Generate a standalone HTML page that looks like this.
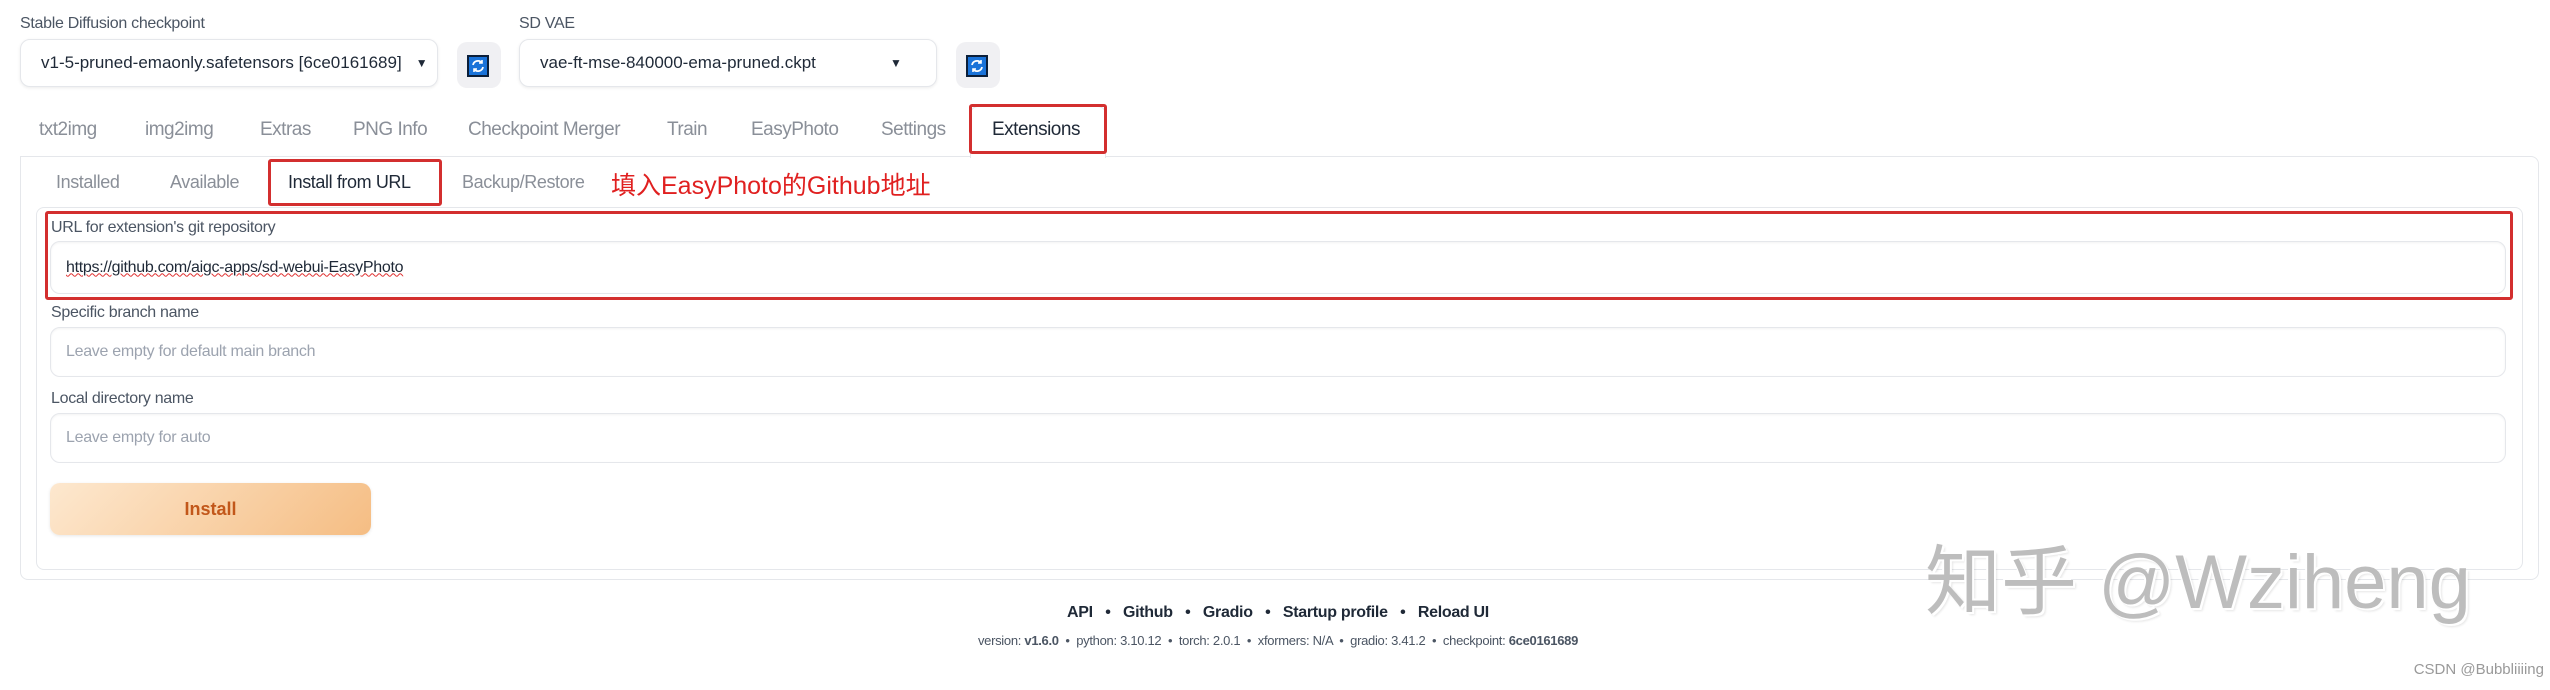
<!DOCTYPE html>
<html><head><meta charset="utf-8">
<style>
*{box-sizing:border-box;margin:0;padding:0}
body{width:2550px;height:690px;background:#fff;position:relative;overflow:hidden;font-family:"Liberation Sans","Noto Sans CJK SC",sans-serif;color:#374151}
.abs{position:absolute}
.lbl{font-size:16px;color:#4b5563;letter-spacing:-0.3px}
.dd{border:1px solid #e5e7eb;border-radius:10px;box-shadow:0 1px 3px rgba(0,0,0,.08);background:#fff;font-size:17px;color:#1f2937;display:flex;align-items:center;padding-left:20px}
.rb{background:#f0f0f3;border-radius:10px;}
.rb svg{position:absolute;left:10px;top:13px;width:22px;height:22px}
.tab{position:absolute;top:119px;font-size:19px;color:#8a8f98;letter-spacing:-0.5px}
.sub{position:absolute;top:172px;font-size:18px;color:#8a8f98;letter-spacing:-0.4px}
.red{position:absolute;border:3px solid #d32f2f;border-radius:3px}
.inp{position:absolute;left:50px;width:2456px;border:1px solid #e5e7eb;border-radius:10px;background:#fff;box-shadow:inset 0 1px 2px rgba(0,0,0,.05);font-size:16px;display:flex;align-items:center;padding-left:15px;letter-spacing:-0.3px}
</style></head><body>
<div class="abs lbl" style="left:20px;top:15px">Stable Diffusion checkpoint</div>
<div class="abs dd" style="left:20px;top:39px;width:418px;height:48px">v1-5-pruned-emaonly.safetensors [6ce0161689] <span style="margin-left:14px;font-size:12px">▼</span></div>
<div class="abs rb" style="left:457px;top:42px;width:44px;height:46px"><svg viewBox="0 0 22 22"><rect x="1" y="1" width="20" height="20" fill="#1a73d9" stroke="#0b1f3a" stroke-width="2"/><path d="M6 10a5 5 0 0 1 9-2M16 12a5 5 0 0 1-9 2" fill="none" stroke="#fff" stroke-width="1.8"/><path d="M15 5v3h-3M7 17v-3h3" fill="none" stroke="#fff" stroke-width="1.6"/></svg></div>
<div class="abs lbl" style="left:519px;top:15px">SD VAE</div>
<div class="abs dd" style="left:519px;top:39px;width:418px;height:48px">vae-ft-mse-840000-ema-pruned.ckpt<span style="position:absolute;left:370px;font-size:12px">▼</span></div>
<div class="abs rb" style="left:956px;top:42px;width:44px;height:46px"><svg viewBox="0 0 22 22"><rect x="1" y="1" width="20" height="20" fill="#1a73d9" stroke="#0b1f3a" stroke-width="2"/><path d="M6 10a5 5 0 0 1 9-2M16 12a5 5 0 0 1-9 2" fill="none" stroke="#fff" stroke-width="1.8"/><path d="M15 5v3h-3M7 17v-3h3" fill="none" stroke="#fff" stroke-width="1.6"/></svg></div>

<div class="tab" style="left:39px">txt2img</div>
<div class="tab" style="left:145px">img2img</div>
<div class="tab" style="left:260px">Extras</div>
<div class="tab" style="left:353px">PNG Info</div>
<div class="tab" style="left:468px">Checkpoint Merger</div>
<div class="tab" style="left:667px">Train</div>
<div class="tab" style="left:751px">EasyPhoto</div>
<div class="tab" style="left:881px">Settings</div>
<div class="abs" style="left:20px;top:156px;width:2519px;height:424px;border:1px solid #e5e7eb;border-radius:0 8px 8px 8px"></div>
<div class="abs" style="left:970px;top:106px;width:136px;height:52px;background:#fff;border:1px solid #e5e7eb;border-bottom:none;border-radius:8px 8px 0 0"></div>
<div class="tab" style="left:992px;color:#1f2937">Extensions</div>
<div class="red" style="left:969px;top:104px;width:138px;height:50px"></div>

<div class="sub" style="left:56px">Installed</div>
<div class="sub" style="left:170px">Available</div>
<div class="sub" style="left:288px;color:#1f2937">Install from URL</div>
<div class="sub" style="left:462px">Backup/Restore</div>
<div class="abs" style="left:611px;top:166px;font-size:25px;color:#e02020">填入EasyPhoto的Github地址</div>
<div class="red" style="left:268px;top:159px;width:174px;height:47px"></div>

<div class="abs" style="left:36px;top:207px;width:2487px;height:363px;border:1px solid #e5e7eb;border-radius:8px"></div>
<div class="abs lbl" style="left:51px;top:219px">URL for extension's git repository</div>
<div class="inp" style="top:241px;height:53px;color:#1f2937;text-decoration:underline wavy #e03030;text-decoration-thickness:1px">https://github.com/aigc-apps/sd-webui-EasyPhoto</div>
<div class="red" style="left:45px;top:211px;width:2468px;height:89px"></div>
<div class="abs lbl" style="left:51px;top:304px">Specific branch name</div>
<div class="inp" style="top:327px;height:50px;color:#9ca3af">Leave empty for default main branch</div>
<div class="abs lbl" style="left:51px;top:390px">Local directory name</div>
<div class="inp" style="top:413px;height:50px;color:#9ca3af">Leave empty for auto</div>
<div class="abs" style="left:50px;top:483px;width:321px;height:52px;border-radius:10px;background:linear-gradient(135deg,#fde8cf,#f5bd83);box-shadow:0 1px 3px rgba(0,0,0,.1);display:flex;align-items:center;justify-content:center;font-size:18px;font-weight:bold;color:#c2571a">Install</div>

<div class="abs" style="left:0;width:2556px;top:604px;text-align:center;font-size:16px;font-weight:bold;color:#1f2937;letter-spacing:-0.3px">API &nbsp; • &nbsp; Github &nbsp; • &nbsp; Gradio &nbsp; • &nbsp; Startup profile &nbsp; • &nbsp; Reload UI</div>
<div class="abs" style="left:0;width:2556px;top:633px;text-align:center;font-size:13px;color:#4b5563;letter-spacing:-0.3px">version: <b>v1.6.0</b> &nbsp;•&nbsp; python: 3.10.12 &nbsp;•&nbsp; torch: 2.0.1 &nbsp;•&nbsp; xformers: N/A &nbsp;•&nbsp; gradio: 3.41.2 &nbsp;•&nbsp; checkpoint: <b>6ce0161689</b></div>

<div class="abs" style="left:1925px;top:520px;font-size:76px;color:#bdbdbd;text-shadow:2px 2px 0 #fff,-2px -2px 0 #fff,3px 3px 2px rgba(0,0,0,.1);white-space:nowrap">知乎 @Wziheng</div>
<div class="abs" style="right:6px;top:661px;font-size:15px;color:#999">CSDN @Bubbliiiing</div>
</body></html>
